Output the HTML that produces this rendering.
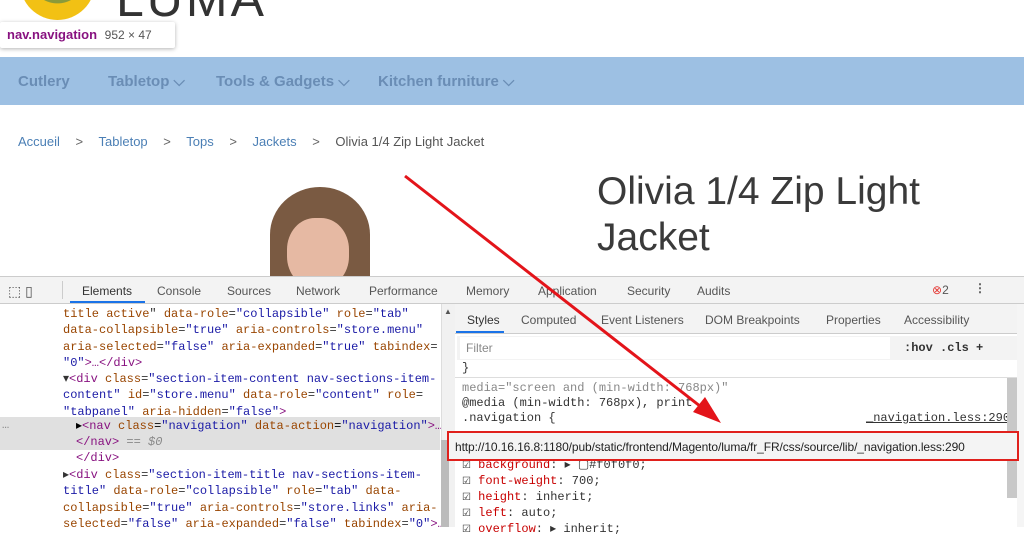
<!DOCTYPE html>
<html><head><meta charset="utf-8"><style>
*{margin:0;padding:0;box-sizing:border-box}
body{width:1024px;height:527px;overflow:hidden;background:#fff;font-family:"Liberation Sans",sans-serif;position:relative}
.a{position:absolute;white-space:nowrap}
.mono{font-family:"Liberation Mono",monospace;font-size:12px}
.dt{font-size:12px;color:#333}
.at{color:#994500}.v{color:#1a1aa6}.tg{color:#881280}.p{color:#c80000}
</style></head><body>
<!-- logo -->
<div class="a" style="left:20px;top:-55px;width:75px;height:75px;border-radius:50%;background:radial-gradient(circle at 50% 40%,#fff 0 22%,#c0561f 23% 40%,#8a9a3a 41% 48%,#f2c114 49%)"></div>
<div class="a" style="left:116px;top:-30px;font-size:50px;color:#333;letter-spacing:3px">LUMA</div>
<!-- tooltip -->
<div class="a" style="left:0;top:22px;width:175px;height:26px;background:#fff;box-shadow:0 1px 4px rgba(0,0,0,.3);border-radius:2px"></div>
<div class="a" style="left:7px;top:27px;font-size:13px;font-weight:bold;color:#881280">nav.navigation <span style="font-weight:normal;color:#555;font-size:12px;margin-left:4px">952 × 47</span></div>
<!-- nav -->
<div class="a" style="left:0;top:57px;width:1024px;height:48px;background:#9dc0e3"></div>
<div class="a" style="left:18px;top:73px;font-size:15px;font-weight:bold;color:#6a8db5">Cutlery</div>
<div class="a" style="left:108px;top:73px;font-size:15px;font-weight:bold;color:#6a8db5">Tabletop ⌵</div>
<div class="a" style="left:216px;top:73px;font-size:15px;font-weight:bold;color:#6a8db5">Tools &amp; Gadgets ⌵</div>
<div class="a" style="left:378px;top:73px;font-size:15px;font-weight:bold;color:#6a8db5">Kitchen furniture ⌵</div>
<!-- breadcrumb -->
<div class="a" style="left:18px;top:134px;font-size:13px;color:#4b7fb5">Accueil <span style="color:#666;margin:0 12px">&gt;</span> Tabletop <span style="color:#666;margin:0 12px">&gt;</span> Tops <span style="color:#666;margin:0 12px">&gt;</span> Jackets <span style="color:#666;margin:0 12px">&gt;</span> <span style="color:#555">Olivia 1/4 Zip Light Jacket</span></div>
<!-- image -->
<div class="a" style="left:270px;top:187px;width:100px;height:95px;border-radius:50% 50% 0 0;background:#7a5a42"></div>
<div class="a" style="left:287px;top:218px;width:62px;height:70px;border-radius:45%;background:#e6b9a3"></div>
<!-- title -->
<div class="a" style="left:597px;top:169px;font-size:39px;color:#3a3a3a;line-height:46px;font-weight:300">Olivia 1/4 Zip Light<br>Jacket</div>
<!-- devtools -->
<div class="a" style="left:0;top:276px;width:1024px;height:251px;background:#fff;border-top:1px solid #ccc"></div>
<div class="a" style="left:0;top:277px;width:1024px;height:27px;background:#f3f3f3;border-bottom:1px solid #ccc"></div>
<div class="a dt" style="left:8px;top:283px;font-size:14px;color:#555">⬚ ▯</div>
<div class="a" style="left:62px;top:281px;width:1px;height:18px;background:#ccc"></div>
<div class="a dt" style="left:82px;top:284px;color:#333">Elements</div>
<div class="a" style="left:70px;top:301px;width:75px;height:2px;background:#1a73e8"></div>
<div class="a dt" style="left:157px;top:284px;color:#555">Console</div>
<div class="a dt" style="left:227px;top:284px;color:#555">Sources</div>
<div class="a dt" style="left:296px;top:284px;color:#555">Network</div>
<div class="a dt" style="left:369px;top:284px;color:#555">Performance</div>
<div class="a dt" style="left:466px;top:284px;color:#555">Memory</div>
<div class="a dt" style="left:538px;top:284px;color:#555">Application</div>
<div class="a dt" style="left:627px;top:284px;color:#555">Security</div>
<div class="a dt" style="left:697px;top:284px;color:#555">Audits</div>
<div class="a dt" style="left:932px;top:283px;color:#555"><span style="color:#e53935">⊗</span>2</div>
<div class="a dt" style="left:974px;top:281px;font-weight:bold;color:#555">⋮</div>
<!-- elements -->
<div class="a mono" style="left:63px;top:306px;line-height:16.3px;color:#333">
<span class="at">title active</span>" <span class="at">data-role</span>=<span class="v">"collapsible"</span> <span class="at">role</span>=<span class="v">"tab"</span><br>
<span class="at">data-collapsible</span>=<span class="v">"true"</span> <span class="at">aria-controls</span>=<span class="v">"store.menu"</span><br>
<span class="at">aria-selected</span>=<span class="v">"false"</span> <span class="at">aria-expanded</span>=<span class="v">"true"</span> <span class="at">tabindex</span>=<br>
<span class="v">"0"</span><span class="tg">&gt;…&lt;/div&gt;</span></div>
<div class="a mono" style="left:63px;top:371px;line-height:16.3px;color:#333">
▾<span class="tg">&lt;div</span> <span class="at">class</span>=<span class="v">"section-item-content nav-sections-item-</span><br>
<span class="v">content"</span> <span class="at">id</span>=<span class="v">"store.menu"</span> <span class="at">data-role</span>=<span class="v">"content"</span> <span class="at">role</span>=<br>
<span class="v">"tabpanel"</span> <span class="at">aria-hidden</span>=<span class="v">"false"</span><span class="tg">&gt;</span></div>
<div class="a" style="left:0;top:417px;width:440px;height:33px;background:#e0e0e0"></div>
<div class="a mono" style="left:2px;top:418px;color:#888">…</div>
<div class="a mono" style="left:76px;top:418px;line-height:16.3px">▸<span class="tg">&lt;nav</span> <span class="at">class</span>=<span class="v">"navigation"</span> <span class="at">data-action</span>=<span class="v">"navigation"</span><span class="tg">&gt;…</span><br><span class="tg">&lt;/nav&gt;</span> <span style="color:#888;font-style:italic">== $0</span></div>
<div class="a mono" style="left:76px;top:451px;color:#881280">&lt;/div&gt;</div>
<div class="a mono" style="left:63px;top:467px;line-height:16.3px;color:#333">
▸<span class="tg">&lt;div</span> <span class="at">class</span>=<span class="v">"section-item-title nav-sections-item-</span><br>
<span class="v">title"</span> <span class="at">data-role</span>=<span class="v">"collapsible"</span> <span class="at">role</span>=<span class="v">"tab"</span> <span class="at">data-</span><br>
<span class="at">collapsible</span>=<span class="v">"true"</span> <span class="at">aria-controls</span>=<span class="v">"store.links"</span> <span class="at">aria-</span><br>
<span class="at">selected</span>=<span class="v">"false"</span> <span class="at">aria-expanded</span>=<span class="v">"false"</span> <span class="at">tabindex</span>=<span class="v">"0"</span><span class="tg">&gt;…</span></div>
<div class="a" style="left:441px;top:304px;width:14px;height:223px;background:#f1f1f1;border-left:1px solid #ddd"></div>
<div class="a" style="left:441px;top:440px;width:8px;height:87px;background:#bbb"></div>
<div class="a" style="left:444px;top:307px;font-size:8px;color:#555">▲</div>
<!-- styles pane -->
<div class="a" style="left:455px;top:304px;width:569px;height:30px;background:#f3f3f3;border-bottom:1px solid #ccc"></div>
<div class="a dt" style="left:467px;top:313px">Styles</div>
<div class="a" style="left:456px;top:331px;width:48px;height:2px;background:#1a73e8"></div>
<div class="a dt" style="left:521px;top:313px;color:#555">Computed</div>
<div class="a dt" style="left:601px;top:313px;color:#555">Event Listeners</div>
<div class="a dt" style="left:705px;top:313px;color:#555">DOM Breakpoints</div>
<div class="a dt" style="left:826px;top:313px;color:#555">Properties</div>
<div class="a dt" style="left:904px;top:313px;color:#555">Accessibility</div>
<div class="a" style="left:457px;top:336px;width:560px;height:24px;background:#f3f3f3"></div>
<div class="a" style="left:460px;top:337px;width:430px;height:22px;background:#fff"></div>
<div class="a dt" style="left:466px;top:341px;color:#888">Filter</div>
<div class="a mono" style="left:904px;top:341px;font-weight:bold;color:#333">:hov .cls +</div>
<div class="a mono" style="left:462px;top:361px;color:#333">}</div>
<div class="a" style="left:455px;top:377px;width:562px;height:1px;background:#ddd"></div>
<div class="a mono" style="left:462px;top:381px;line-height:15px;color:#333"><span style="color:#888">media="screen and (min-width: 768px)"</span><br>@media (min-width: 768px), print<br>.navigation {</div>
<div class="a mono" style="left:866px;top:411px;color:#333;text-decoration:underline">_navigation.less:290</div>
<div class="a mono" style="left:462px;top:458px;line-height:15px;color:#333">
<span style="font-size:10px">☑</span> <span class="p">background</span>: ▸ ▢#f0f0f0;<br>
<span style="font-size:10px">☑</span> <span class="p">font-weight</span>: 700;<br>
<span style="font-size:10px">☑</span> <span class="p">height</span>: inherit;<br>
<span style="font-size:10px">☑</span> <span class="p">left</span>: auto;<br>
<span style="font-size:10px">☑</span> <span class="p">overflow</span>: ▸ inherit;</div>
<div class="a" style="left:1007px;top:378px;width:10px;height:120px;background:#c8c8c8"></div>
<div class="a" style="left:1017px;top:304px;width:7px;height:223px;background:#f5f5f5"></div>
<!-- url tooltip with red box -->
<div class="a" style="left:447px;top:431px;width:572px;height:30px;border:2px solid #e0201c;background:#f4f4f4"></div>
<div class="a" style="left:455px;top:440px;font-size:12px;color:#222;letter-spacing:-.1px">http://10.16.16.8:1180/pub/static/frontend/Magento/luma/fr_FR/css/source/lib/_navigation.less:290</div>
<!-- arrow -->
<svg class="a" style="left:0;top:0" width="1024" height="527"><line x1="405" y1="176" x2="705" y2="410" stroke="#e3141a" stroke-width="3"/><polygon points="721,423 693,412 705,397" fill="#e3141a"/></svg>
</body></html>
